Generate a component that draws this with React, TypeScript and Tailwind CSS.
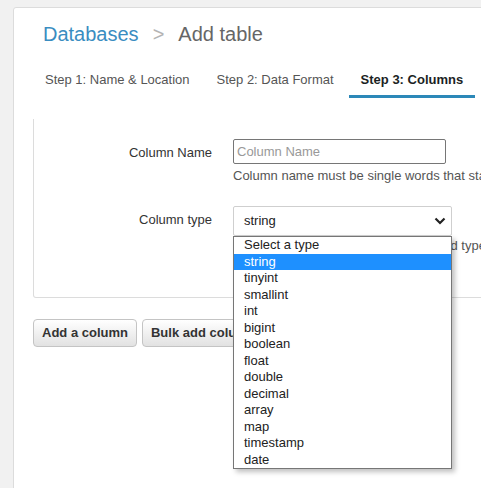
import React from "react";

const types = [
  "Select a type",
  "string",
  "tinyint",
  "smallint",
  "int",
  "bigint",
  "boolean",
  "float",
  "double",
  "decimal",
  "array",
  "map",
  "timestamp",
  "date",
];

const tabs = ["Step 1: Name & Location", "Step 2: Data Format", "Step 3: Columns"];

export default function App() {
  return (
    <div
      className="w-[481px] h-[488px] overflow-hidden bg-[#f1f1f1] pt-[7px] pl-[13px] text-[13px] text-[#333]"
      style={{ fontFamily: '"Liberation Sans", Arial, sans-serif' }}
    >
      <div className="w-[760px] h-[600px] bg-white border border-[#dcdcdc] rounded-[3px] pt-[12px] pl-[19px]">
        {/* Breadcrumb */}
        <div className="flex items-center gap-[14px] pl-[10px] h-[28px] text-[20px] leading-[28px]">
          <span className="text-[#3a8dc1]">Databases</span>
          <span className="text-[#b4b4b4]">&gt;</span>
          <span className="text-[#666]">Add table</span>
        </div>

        {/* Steps */}
        <div className="flex gap-[3px] mt-[16px]">
          {tabs.map((t, i) => (
            <div
              key={t}
              className={
                i === 2
                  ? "px-[12px] pt-[8px] pb-[7px] leading-[16px] border-b-[3px] border-[#2c88b8] font-bold text-[#1b1f24]"
                  : "px-[12px] pt-[8px] pb-[7px] leading-[16px] border-b-[3px] border-transparent text-[#555]"
              }
            >
              {t}
            </div>
          ))}
        </div>

        {/* Column form */}
        <div className="w-[700px] mt-[21px] border-l border-r border-b border-[#dcdcdc] rounded-b-[3px] pt-[20px] pb-[42px]">
          <div className="flex items-start gap-[21px]">
            <label className="w-[178px] text-right leading-[18px] mt-[5px]">Column Name</label>
            <div className="flex flex-col">
              <input
                placeholder="Column Name"
                className="w-[213px] h-[25px] border border-[#767676] rounded-[2px] pl-[3px] text-[13px] outline-none placeholder:text-[#999]"
              />
              <span className="mt-[3px] leading-[18px] text-[#555] whitespace-nowrap">
                Column name must be single words that start with a letter or underscore
              </span>
            </div>
          </div>

          <div className="flex items-start gap-[21px] mt-[21px]">
            <label className="w-[178px] text-right leading-[18px] mt-[5px]">Column type</label>
            <div className="flex flex-col">
              <div className="relative w-[219px] h-[30px] border border-[#cfcfcf] rounded-[2px] pl-[10px] flex items-center justify-between pr-[4px] bg-white">
                <span className="text-[#222]">string</span>
                <svg width="12" height="8" viewBox="0 0 12 8" className="mr-px">
                  <polyline points="1.5,1.5 6,6 10.5,1.5" fill="none" stroke="#222" strokeWidth="2.2" />
                </svg>

                {/* Open option list */}
                <div className="absolute left-[-1px] top-[29px] w-[219px] z-10 bg-white border border-[#767676] shadow-[3px_3px_5px_rgba(0,0,0,0.25)]">
                  {types.map((t) => (
                    <div
                      key={t}
                      className={
                        t === "string"
                          ? "h-[16.5px] leading-[16.5px] pl-[10px] bg-[#1e90ff] text-white"
                          : "h-[16.5px] leading-[16.5px] pl-[10px] text-[#222]"
                      }
                    >
                      {t}
                    </div>
                  ))}
                </div>
              </div>
              <span className="mt-px leading-[18px] text-[#555] whitespace-nowrap">
                Column type must be a Hive supported type
              </span>
            </div>
          </div>
        </div>

        <div className="flex gap-[5px] mt-[21px]">
          <button className="h-[28px] px-[8px] border border-[#c4c4c4] rounded-[4px] bg-gradient-to-b from-white to-[#e2e2e2] font-bold text-[#333] text-[13px]">
            Add a column
          </button>
          <button className="h-[28px] px-[8px] border border-[#c4c4c4] rounded-[4px] bg-gradient-to-b from-white to-[#e2e2e2] font-bold text-[#333] text-[13px]">
            Bulk add columns
          </button>
        </div>
      </div>
    </div>
  );
}
